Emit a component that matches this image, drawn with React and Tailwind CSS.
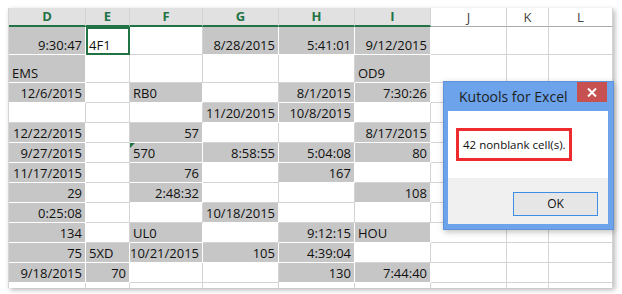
import clsx from "clsx";

// column letters, widths (incl. right gridline), and whether the header is highlighted
const COLS = [
    { id: "D", w: "w-[77px]", sel: true },
    { id: "E", w: "w-[44px]", sel: true },
    { id: "F", w: "w-[73px]", sel: true },
    { id: "G", w: "w-[76px]", sel: true },
    { id: "H", w: "w-[76px]", sel: true },
    { id: "I", w: "w-[76px]", sel: true },
    { id: "J", w: "w-[76px]", sel: false },
    { id: "K", w: "w-[42px]", sel: false },
    { id: "L", w: "w-[64px]", sel: false },
];

// r = right aligned value, l = text value, 0 = empty
const r = (v) => ({ v, a: "r" });
const l = (v) => ({ v, a: "l" });

const ROWS = [
    { h: "h-[28px]", cells: [r("9:30:47"), { v: "4F1", a: "l", active: true }, 0, r("8/28/2015"), r("5:41:01"), r("9/12/2015")] },
    { h: "h-[28px]", cells: [l("EMS"), 0, 0, 0, 0, l("OD9")] },
    { h: "h-[20px]", cells: [r("12/6/2015"), 0, l("RB0"), 0, r("8/1/2015"), r("7:30:26")] },
    { h: "h-[20px]", cells: [0, 0, 0, r("11/20/2015"), r("10/8/2015"), 0] },
    { h: "h-[20px]", cells: [r("12/22/2015"), 0, r("57"), 0, 0, r("8/17/2015")] },
    { h: "h-[20px]", cells: [r("9/27/2015"), 0, { v: "570", a: "l", flag: true }, r("8:58:55"), r("5:04:08"), r("80")] },
    { h: "h-[20px]", cells: [r("11/17/2015"), 0, r("76"), 0, r("167"), 0] },
    { h: "h-[20px]", cells: [r("29"), 0, r("2:48:32"), 0, 0, r("108")] },
    { h: "h-[20px]", cells: [r("0:25:08"), 0, 0, r("10/18/2015"), 0, 0] },
    { h: "h-[20px]", cells: [r("134"), 0, l("UL0"), 0, r("9:12:15"), l("HOU")] },
    { h: "h-[20px]", cells: [r("75"), l("5XD"), r("10/21/2015"), r("105"), r("4:39:04"), 0] },
    { h: "h-[20px]", cells: [r("9/18/2015"), r("70"), 0, 0, r("130"), r("7:44:40")] },
    { h: "h-[20px]", cells: [] },
];

function Cell({ col, cell }) {
    const filled = cell && !cell.active;
    return (
        <div
            className={clsx(
                "relative flex shrink-0 items-end border-r border-b px-[3px] leading-[18px]",
                col.w,
                filled ? "border-white bg-[#c6c6c6]" : "border-[#d4d4d4] bg-white",
                cell && cell.a === "r" ? "justify-end" : "justify-start"
            )}
        >
            {cell && cell.flag && (
                <span className="absolute left-0 top-0 h-0 w-0 border-r-[5px] border-t-[5px] border-r-transparent border-t-[#217346]" />
            )}
            {cell && cell.active && (
                <span className="absolute bottom-[-1px] left-0 right-[-1px] top-0 border-2 border-[#217346]" />
            )}
            <span className="relative">{cell ? cell.v : ""}</span>
        </div>
    );
}

function Dialog() {
    return (
        <div className="absolute left-[443px] top-[81px] flex w-[171px] flex-col border border-[#5e93da] bg-[#6ca3ea] pb-[5px] pl-[4px] pr-[5px] shadow-[1px_2px_6px_rgba(0,0,0,0.25)]">
            {/* title bar */}
            <div className="flex h-[29px] items-start justify-between">
                <span className="pl-[11px] pt-[6px] text-[14px] leading-[18px] text-[#1e1e1e]">
                    Kutools for Excel
                </span>
                <button className="mr-[1px] flex h-[20px] w-[30px] items-center justify-center bg-[#c75050]">
                    <svg width="10" height="9" viewBox="0 0 10 9">
                        <path d="M1 0.5 L9 8.5 M9 0.5 L1 8.5" stroke="#fff" strokeWidth="2" />
                    </svg>
                </button>
            </div>

            {/* message */}
            <div className="h-[67px] bg-white pl-[8px] pt-[17px]">
                <div className="flex h-[33px] w-[116px] items-center border-[3px] border-[#ee2b2e] pl-[4px] text-[11.5px] text-[#111]">
                    42 nonblank cell(s).
                </div>
            </div>

            {/* buttons */}
            <div className="flex h-[46px] items-start justify-end bg-[#f0f0f0] pr-[10px] pt-[14px]">
                <button className="h-[24px] w-[85px] border border-[#3d8ee0] bg-[#e6e6e6] text-[12px] leading-[22px] text-[#111]">
                    OK
                </button>
            </div>
        </div>
    );
}

export default function App() {
    return (
        <div
            className="relative h-[294px] w-[622px] overflow-hidden bg-white pl-[8px] pt-[8px] text-[13px] text-[#111]"
            style={{ fontFamily: '"Open Sans", "Noto Sans", sans-serif' }}
        >
            <div className="h-[280px] w-[605px] overflow-hidden border-l border-[#d4d4d4] bg-white shadow-[2px_2px_5px_rgba(0,0,0,0.28)]">
                {/* column headers */}
                <div className="flex">
                    {COLS.map((col) => (
                        <div
                            key={col.id}
                            className={clsx(
                                "flex h-[19px] shrink-0 items-center justify-center border-r border-[#d4d4d4] leading-[17px]",
                                col.w,
                                col.sel
                                    ? "border-b-2 border-b-[#217346] bg-[#e1e1e1] font-bold text-[#217346]"
                                    : "border-b border-b-[#ababab] bg-white text-[#444]"
                            )}
                        >
                            {col.id}
                        </div>
                    ))}
                </div>

                {/* cells */}
                {ROWS.map((row, i) => (
                    <div key={i} className={clsx("flex", row.h)}>
                        {COLS.map((col, j) => (
                            <Cell key={col.id} col={col} cell={row.cells[j] || null} />
                        ))}
                    </div>
                ))}
            </div>

            <Dialog />
        </div>
    );
}
